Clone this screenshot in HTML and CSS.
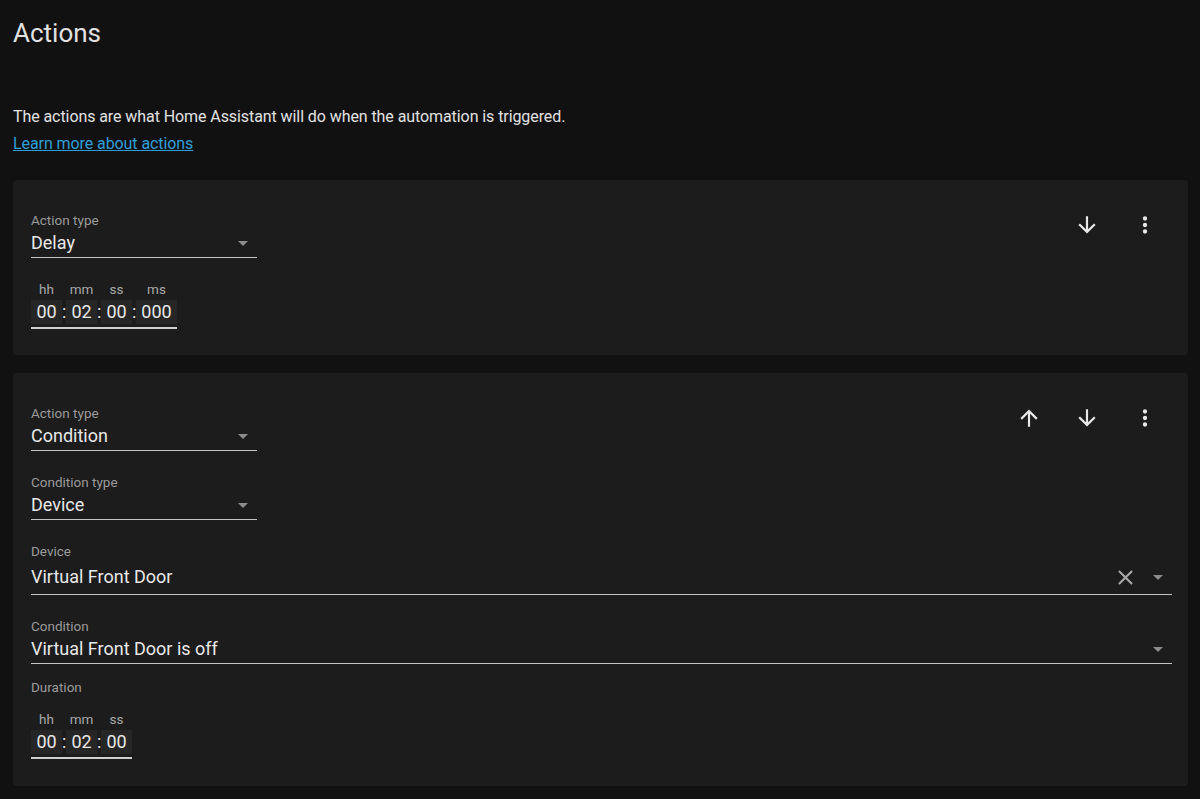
FILE: index.html
```html
<!DOCTYPE html>
<html lang="en">
<head>
    <meta charset="UTF-8">
    <meta name="viewport" content="width=device-width, initial-scale=1.0">
    <title>Actions</title>
    <link rel="stylesheet" href="styles.css">
</head>
<body>
    <div class="page">
        <h1 class="title">Actions</h1>
        <p class="intro">The actions are what Home Assistant will do when the automation is triggered.</p>
        <a class="learn" href="#">Learn more about actions</a>

        <div class="card">
            <div class="card-menu">
                <button class="icon-btn" title="Move down">
                    <svg viewBox="0 0 24 24"><path d="M11,4H13V16L18.5,10.5L19.92,11.92L12,19.84L4.08,11.92L5.5,10.5L11,16V4Z"/></svg>
                </button>
                <button class="icon-btn" title="Menu">
                    <svg viewBox="0 0 24 24"><path d="M12,16A2,2 0 0,1 14,18A2,2 0 0,1 12,20A2,2 0 0,1 10,18A2,2 0 0,1 12,16M12,10A2,2 0 0,1 14,12A2,2 0 0,1 12,14A2,2 0 0,1 10,12A2,2 0 0,1 12,10M12,4A2,2 0 0,1 14,6A2,2 0 0,1 12,8A2,2 0 0,1 10,6A2,2 0 0,1 12,4Z"/></svg>
                </button>
            </div>

            <div class="field narrow">
                <div class="field-label">Action type</div>
                <div class="field-row">
                    <span class="field-value">Delay</span>
                    <svg class="caret" viewBox="0 0 24 24"><path d="M7,10L12,15L17,10H7Z"/></svg>
                </div>
            </div>

            <div class="time delay-time">
                <div class="time-unit"><span class="time-label">hh</span><span class="time-box">00</span></div>
                <span class="time-sep">:</span>
                <div class="time-unit"><span class="time-label">mm</span><span class="time-box">02</span></div>
                <span class="time-sep">:</span>
                <div class="time-unit"><span class="time-label">ss</span><span class="time-box">00</span></div>
                <span class="time-sep">:</span>
                <div class="time-unit"><span class="time-label">ms</span><span class="time-box wide">000</span></div>
            </div>
        </div>

        <div class="card">
            <div class="card-menu">
                <button class="icon-btn" title="Move up">
                    <svg viewBox="0 0 24 24"><path d="M13,20H11V8L5.5,13.5L4.08,12.08L12,4.16L19.92,12.08L18.5,13.5L13,8V20Z"/></svg>
                </button>
                <button class="icon-btn" title="Move down">
                    <svg viewBox="0 0 24 24"><path d="M11,4H13V16L18.5,10.5L19.92,11.92L12,19.84L4.08,11.92L5.5,10.5L11,16V4Z"/></svg>
                </button>
                <button class="icon-btn" title="Menu">
                    <svg viewBox="0 0 24 24"><path d="M12,16A2,2 0 0,1 14,18A2,2 0 0,1 12,20A2,2 0 0,1 10,18A2,2 0 0,1 12,16M12,10A2,2 0 0,1 14,12A2,2 0 0,1 12,14A2,2 0 0,1 10,12A2,2 0 0,1 12,10M12,4A2,2 0 0,1 14,6A2,2 0 0,1 12,8A2,2 0 0,1 10,6A2,2 0 0,1 12,4Z"/></svg>
                </button>
            </div>

            <div class="field narrow">
                <div class="field-label">Action type</div>
                <div class="field-row">
                    <span class="field-value">Condition</span>
                    <svg class="caret" viewBox="0 0 24 24"><path d="M7,10L12,15L17,10H7Z"/></svg>
                </div>
            </div>

            <div class="field narrow">
                <div class="field-label">Condition type</div>
                <div class="field-row">
                    <span class="field-value">Device</span>
                    <svg class="caret" viewBox="0 0 24 24"><path d="M7,10L12,15L17,10H7Z"/></svg>
                </div>
            </div>

            <div class="field tall">
                <div class="field-label">Device</div>
                <div class="field-row">
                    <span class="field-value">Virtual Front Door</span>
                    <svg class="clear" viewBox="0 0 24 24"><path d="M19,6.41L17.59,5L12,10.59L6.41,5L5,6.41L10.59,12L5,17.59L6.41,19L12,13.41L17.59,19L19,17.59L13.41,12L19,6.41Z"/></svg>
                    <svg class="caret" viewBox="0 0 24 24"><path d="M7,10L12,15L17,10H7Z"/></svg>
                </div>
            </div>

            <div class="field">
                <div class="field-label">Condition</div>
                <div class="field-row">
                    <span class="field-value">Virtual Front Door is off</span>
                    <svg class="caret" viewBox="0 0 24 24"><path d="M7,10L12,15L17,10H7Z"/></svg>
                </div>
            </div>

            <div class="duration-label">Duration</div>
            <div class="time">
                <div class="time-unit"><span class="time-label">hh</span><span class="time-box">00</span></div>
                <span class="time-sep">:</span>
                <div class="time-unit"><span class="time-label">mm</span><span class="time-box">02</span></div>
                <span class="time-sep">:</span>
                <div class="time-unit"><span class="time-label">ss</span><span class="time-box">00</span></div>
            </div>
        </div>
    </div>
</body>
</html>
```

FILE: styles.css
```css
body { margin: 0; background: #111111; color: #e1e1e1; font-family: Roboto, "Noto Sans", sans-serif; }
.page { padding: 15px 12px 12px 13px; }
.title { font-size: 26px; font-weight: 400; line-height: 36px; margin: 0 0 54px 0; color: #e1e1e1; }
.intro { font-size: 16px; line-height: 24px; margin: 0 0 3px 0; color: #e1e1e1; letter-spacing: -0.08px; }
.learn { display: inline-block; font-size: 16px; line-height: 24px; color: #2f9fd8; text-decoration: underline; margin-bottom: 24px; letter-spacing: -0.08px; }

.card { position: relative; background: #1c1c1c; border-radius: 4px; padding: 32px 16px 27px 18px; margin-bottom: 18px; }
.card-menu { position: absolute; top: 21px; right: 19px; display: flex; gap: 10px; }
.icon-btn { width: 48px; height: 48px; padding: 0; border: none; background: none; display: flex; align-items: center; justify-content: center; }
.icon-btn svg { width: 26px; height: 26px; fill: #e8e8e8; }

.field { border-bottom: 1px solid #c4c4c4; padding-bottom: 2px; margin-bottom: 23px; }
.field.narrow { width: 226px; }
.field-label { font-size: 13.5px; line-height: 16px; color: #9a9a9a; }
.field-row { display: flex; align-items: center; margin-top: 3px; height: 24px; }
.field.tall .field-row { margin-top: 6px; margin-bottom: 3px; }
.field-value { flex: 1; font-size: 18px; line-height: 24px; color: #e8e8e8; white-space: nowrap; }
.caret { width: 24px; height: 24px; fill: #8c8c8c; margin-right: 2px; }
.clear { width: 25px; height: 25px; fill: #a8a8a8; margin-right: 8px; }

.duration-label { font-size: 13.5px; line-height: 16px; color: #9a9a9a; margin-top: -8px; margin-bottom: 16px; }

.time { display: flex; width: fit-content; align-items: flex-end; border-bottom: 2px solid #d0d0d0; padding-bottom: 3px; }
.delay-time { margin-bottom: -1px; }
.time-unit { display: flex; flex-direction: column; align-items: center; }
.time-label { font-size: 13.5px; line-height: 16px; color: #a8a8a8; margin-bottom: 3px; }
.time-box { background: #262626; font-size: 18px; line-height: 24px; width: 31px; text-align: center; color: #e8e8e8; }
.time-box.wide { width: 41px; }
.time-sep { font-size: 18px; line-height: 24px; width: 4px; text-align: center; color: #e8e8e8; }
```
